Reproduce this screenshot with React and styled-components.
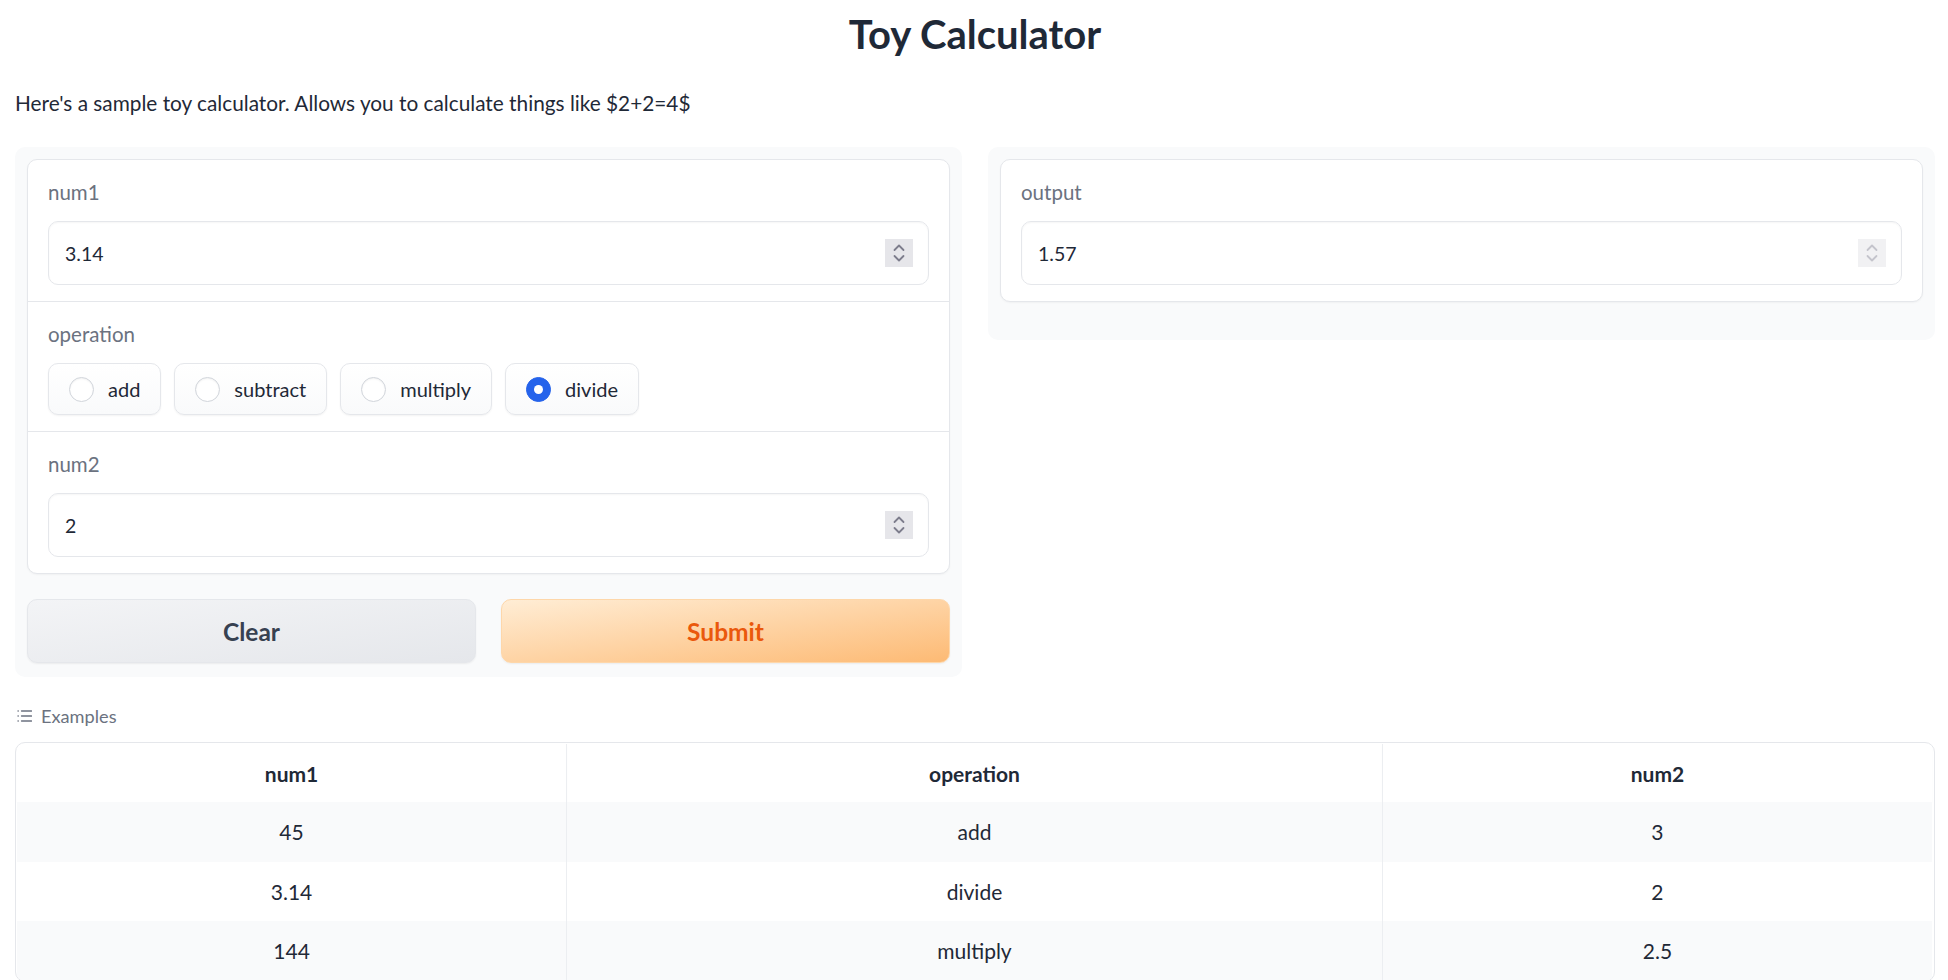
import React from "react";
import styled, { createGlobalStyle } from "styled-components";

const GlobalStyle = createGlobalStyle`
  html, body { margin: 0; padding: 0; background: #ffffff; }
  body { font-family: Lato, "Noto Sans", sans-serif; color: #1f2937; }
  * { box-sizing: border-box; }
`;

const Page = styled.div`
  padding: 10px 13px 0 15px;
  width: 1948px;
`;

const Title = styled.h1`
  margin: 0;
  text-align: center;
  font-size: 40px;
  line-height: 48px;
  font-weight: 700;
  color: #1f2937;
`;

const Description = styled.p`
  margin: 30px 0 0;
  font-size: 20.8px;
  line-height: 30px;
  color: #1f2937;
`;

const Columns = styled.div`
  display: grid;
  grid-template-columns: 1fr 1fr;
  gap: 26px;
  margin-top: 29px;
  align-items: start;
`;

const Panel = styled.div`
  background: #f9fafb;
  border-radius: 10px;
  padding: 12px 12px ${(p) => p.$bottom}px;
  display: flex;
  flex-direction: column;
  gap: 25px;
`;

const FormBox = styled.div`
  background: #ffffff;
  border: 1px solid #e5e7eb;
  border-radius: 10px;
  overflow: hidden;
  box-shadow: 0 1px 2px rgba(0, 0, 0, 0.04);
`;

const Block = styled.div`
  padding: 20px 20px 16px 20px;
  display: flex;
  flex-direction: column;
  gap: 17px;
  & + & {
    border-top: 1px solid #e5e7eb;
  }
`;

const Label = styled.span`
  font-size: 20.5px;
  line-height: 24px;
  color: #6b7280;
`;

const Field = styled.div`
  height: 64px;
  border: 1px solid #e5e7eb;
  border-radius: 10px;
  background: #ffffff;
  box-shadow: inset 0 1px 2px rgba(0, 0, 0, 0.04);
  display: flex;
  align-items: center;
  padding: 0 15px 0 16px;
`;

const FieldInput = styled.input`
  flex: 1;
  border: none;
  outline: none;
  background: transparent;
  font-family: inherit;
  font-size: 19.5px;
  color: #1f2937;
  padding: 0;
`;

const Spinner = styled.div`
  width: 28px;
  height: 28px;
  background: ${(p) => (p.$disabled ? "#f1f1f3" : "#e6e6ea")};
  display: flex;
  align-items: center;
  justify-content: center;
  color: ${(p) => (p.$disabled ? "#c4c4cc" : "#7d7d8c")};
`;

const RadioRow = styled.div`
  display: flex;
  gap: 13px;
`;

const Pill = styled.label`
  height: 52px;
  display: flex;
  align-items: center;
  gap: 14px;
  padding: 0 20px;
  border: 1px solid #e5e7eb;
  border-radius: 10px;
  background: linear-gradient(to bottom, #ffffff, #f9fafb);
  box-shadow: 0 1px 2px rgba(0, 0, 0, 0.05);
  font-size: 20px;
  color: #1f2937;
  cursor: pointer;
`;

const RadioDot = styled.span`
  width: 25px;
  height: 25px;
  border-radius: 50%;
  flex: none;
  background: ${(p) => (p.$checked ? "#2563eb" : "#ffffff")};
  border: 1px solid ${(p) => (p.$checked ? "#2563eb" : "#d1d5db")};
  box-shadow: ${(p) => (p.$checked ? "none" : "inset 0 1px 2px rgba(0,0,0,0.06)")};
  display: flex;
  align-items: center;
  justify-content: center;
  &::after {
    content: "";
    width: 9px;
    height: 9px;
    border-radius: 50%;
    background: #ffffff;
    display: ${(p) => (p.$checked ? "block" : "none")};
  }
`;

const Buttons = styled.div`
  display: grid;
  grid-template-columns: 1fr 1fr;
  gap: 25px;
`;

const Button = styled.button`
  height: 64px;
  border-radius: 10px;
  font-family: inherit;
  font-size: 24.5px;
  font-weight: 700;
  cursor: pointer;
  border: 1px solid ${(p) => (p.$primary ? "#fed7aa" : "#e5e7eb")};
  color: ${(p) => (p.$primary ? "#ea580c" : "#374151")};
  background: ${(p) =>
    p.$primary
      ? "linear-gradient(to bottom right, #ffedd5, #fdba74)"
      : "linear-gradient(to bottom right, #f3f4f6, #e5e7eb)"};
  box-shadow: 0 1px 2px rgba(0, 0, 0, 0.06);
`;

const ExamplesHeader = styled.div`
  margin-top: 27px;
  display: flex;
  align-items: center;
  gap: 9px;
  height: 24px;
  padding-left: 2px;
  font-size: 18.2px;
  color: #6b7280;
`;

const TableWrap = styled.div`
  margin-top: 14px;
  border: 1px solid #e5e7eb;
  border-radius: 10px;
  overflow: hidden;
  padding: 1px 2px 0 1px;
`;

const Table = styled.table`
  width: 100%;
  border-collapse: collapse;
  table-layout: fixed;
`;

const HeadCell = styled.th`
  height: 58px;
  font-size: 21px;
  font-weight: 700;
  color: #1f2937;
  text-align: center;
  box-shadow: 0 2px 2px -1px rgba(0, 0, 0, 0.1);
  & + & {
    border-left: 1px solid #eceef1;
  }
`;

const Row = styled.tr`
  background: ${(p) => (p.$odd ? "#f9fafb" : "#ffffff")};
`;

const Cell = styled.td`
  height: 59.5px;
  font-size: 21px;
  color: #1f2937;
  text-align: center;
  & + & {
    border-left: 1px solid #eceef1;
  }
`;

function Chevrons() {
  return (
    <svg width="14" height="22" viewBox="0 0 14 22" fill="none" stroke="currentColor" strokeWidth="1.8" strokeLinecap="round" strokeLinejoin="round">
      <path d="M2.5 8 L7 3.5 L11.5 8" />
      <path d="M2.5 14 L7 18.5 L11.5 14" />
    </svg>
  );
}

function ListIcon() {
  return (
    <svg width="15" height="14" viewBox="0 0 15 14" fill="none" stroke="#6b7280" strokeWidth="1.3" strokeLinecap="round">
      <path d="M1 2h0.3M1 7h0.3M1 12h0.3" />
      <path d="M4.5 2h10M4.5 7h10M4.5 12h10" />
    </svg>
  );
}

function NumberField({ label, value, disabled }) {
  return (
    <Block>
      <Label>{label}</Label>
      <Field>
        <FieldInput defaultValue={value} readOnly={disabled} />
        <Spinner $disabled={disabled}>
          <Chevrons />
        </Spinner>
      </Field>
    </Block>
  );
}

const operations = ["add", "subtract", "multiply", "divide"];

const examples = [
  ["45", "add", "3"],
  ["3.14", "divide", "2"],
  ["144", "multiply", "2.5"],
];

export default function App() {
  const [op, setOp] = React.useState("divide");
  return (
    <>
      <GlobalStyle />
      <Page>
        <Title>Toy Calculator</Title>
        <Description>Here's a sample toy calculator. Allows you to calculate things like $2+2=4$</Description>
        <Columns>
          <Panel $bottom={14}>
            <FormBox>
              <NumberField label="num1" value="3.14" />
              <Block>
                <Label>operation</Label>
                <RadioRow>
                  {operations.map((o) => (
                    <Pill key={o} onClick={() => setOp(o)}>
                      <RadioDot $checked={op === o} />
                      {o}
                    </Pill>
                  ))}
                </RadioRow>
              </Block>
              <NumberField label="num2" value="2" />
            </FormBox>
            <Buttons>
              <Button>Clear</Button>
              <Button $primary>Submit</Button>
            </Buttons>
          </Panel>
          <Panel $bottom={38}>
            <FormBox>
              <NumberField label="output" value="1.57" disabled />
            </FormBox>
          </Panel>
        </Columns>
        <ExamplesHeader>
          <ListIcon />
          Examples
        </ExamplesHeader>
        <TableWrap>
          <Table>
            <colgroup>
              <col style={{ width: "28.7%" }} />
              <col style={{ width: "42.6%" }} />
              <col style={{ width: "28.7%" }} />
            </colgroup>
            <thead>
              <tr>
                <HeadCell>num1</HeadCell>
                <HeadCell>operation</HeadCell>
                <HeadCell>num2</HeadCell>
              </tr>
            </thead>
            <tbody>
              {examples.map((r, i) => (
                <Row key={i} $odd={i % 2 === 0}>
                  {r.map((c, j) => (
                    <Cell key={j}>{c}</Cell>
                  ))}
                </Row>
              ))}
            </tbody>
          </Table>
        </TableWrap>
      </Page>
    </>
  );
}
